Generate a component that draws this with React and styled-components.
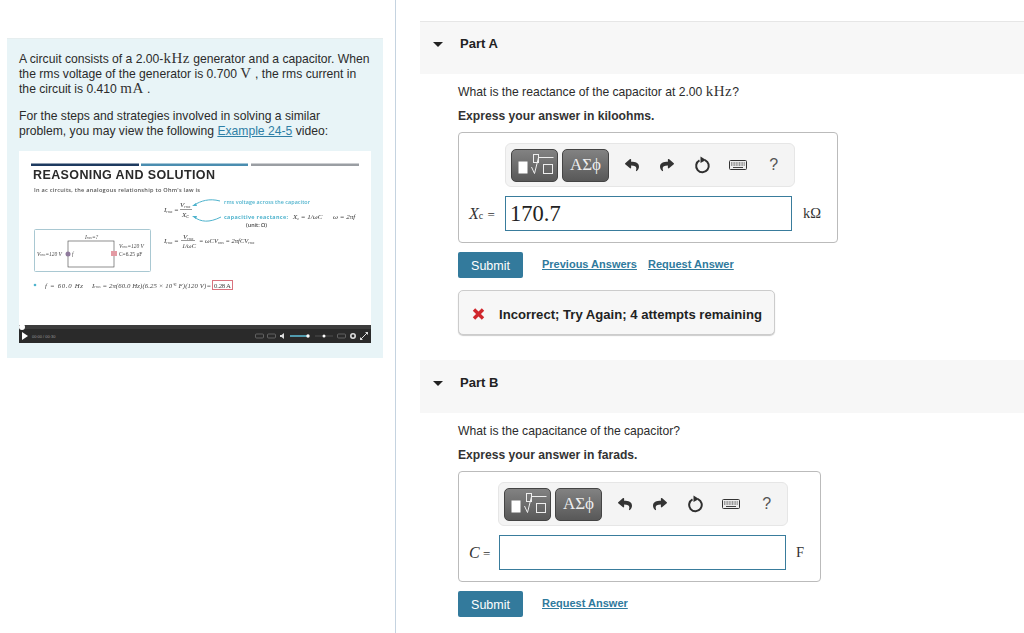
import React from "react";
import styled, { createGlobalStyle } from "styled-components";
import { FaReply, FaShare } from "react-icons/fa";

const Global = createGlobalStyle`
  html, body { margin: 0; padding: 0; background: #fff; }
  body { font-family: "Liberation Sans", Arial, sans-serif; color: #222; overflow: hidden; }
`;
const Page = styled.div`display: flex; width: 1024px; height: 633px; overflow: hidden;`;
const LeftColumn = styled.aside`
  width: 395px; flex: none; box-sizing: content-box; border-right: 1px solid #c5d3e0;
  padding-top: 38px;
`;
const Intro = styled.section`
  width: 376px; margin-left: 7px; height: 320px; box-sizing: border-box; background: #e8f4f7;
  border-top: 1px solid #e6eeef; padding: 13px 12px 0;
`;
const IntroText = styled.p`
  margin: 0 0 12px; font-size: 12.15px; line-height: 15px; color: #2b2b2b; width: 352px;
`;
const Tex = styled.span`
  font-family: "Liberation Serif", serif; font-size: 15px; line-height: 0; letter-spacing: .5px; color: #333;
`;
const Link = styled.a`
  color: ${p => (p.$bold ? "#2f7a9d" : "#2f7fa6")}; text-decoration: underline; font-weight: ${p => (p.$bold ? 700 : 400)};
  font-size: ${p => (p.$bold ? "11px" : "inherit")};
  padding-bottom: ${p => (p.$bold ? "2px" : "0")};
`;
const Video = styled.div`width: 352px; margin-top: 12px; position: relative;`;
const Slide = styled.svg`display: block; width: 352px; height: 174px; background: #fff; filter: blur(0.45px);`;
const VideoBar = styled.div`
  height: 18px; background: #2a2a2a; border-top: 4px solid #3c3c3c; box-sizing: border-box;
  display: flex; align-items: center; gap: 3px; padding: 0 3px;
`;
const Knob = styled.span`
  position: absolute; left: 0; bottom: 13px; width: 6px; height: 6px; border-radius: 50%; background: #fff;
`;
const VideoTime = styled.span`font-size: 4px; color: #999; margin-right: auto;`;
const VideoIcon = styled.svg`display: block; flex: none; height: 8px; width: ${p => p.$w || 8}px;`;

const RightColumn = styled.main`flex: 1; padding: 21px 0 0 24px; min-width: 0;`;
const Part = styled.section`margin-bottom: ${p => p.$gap || 0}px;`;
const PartHeader = styled.header`
  height: 53px; box-sizing: border-box; background: #f7f7f7; border-top: 1px solid ${p => (p.$line ? "#e6e6e6" : "#f7f7f7")};
  display: flex; align-items: flex-start; padding: 14px 0 0 13px;
`;
const Caret = styled.span`
  width: 0; height: 0; margin-top: 6px; border-left: 5px solid transparent; border-right: 5px solid transparent; border-top: 5px solid #222;
`;
const PartTitle = styled.h3`margin: 0 0 0 17px; font-size: 13px; line-height: 15px; font-weight: 700; color: #222;`;
const PartBody = styled.div`padding: 11px 0 0 38px;`;
const Question = styled.p`margin: 0; font-size: 12.15px; line-height: 15px; color: #2b2b2b;`;
const Instruction = styled.p`margin: 9px 0 8px; font-size: 12.15px; line-height: 15px; font-weight: 700; color: #333;`;
const AnswerBox = styled.div`
  width: ${p => p.$w}px; height: 111px; box-sizing: border-box; border: 1px solid #bbb; border-radius: 4px; background: #fff;
  padding: 10px 0 0; display: flex; flex-direction: column;
`;
const Toolbar = styled.div`
  margin-left: ${p => p.$left}px; width: 290px; height: 44px; box-sizing: border-box; border: 1px solid #e6e6e6; border-radius: 6px;
  background: #f4f4f4; display: flex; align-items: center; padding: 0 0 0 5px;
`;
const ToolButton = styled.div`
  width: 47px; height: 33px; box-sizing: border-box; margin-right: 4px; border: 1px solid #444; border-radius: 5px;
  background: linear-gradient(#828282, #585858); color: #eee; display: flex; align-items: center; justify-content: center;
  font-family: "Liberation Serif", serif; font-size: 17px;
`;
const ToolIcons = styled.div`
  flex: 1; display: grid; grid-template-columns: repeat(5, 35.5px); justify-items: center; align-items: center; padding-left: 1px; color: #333;
`;
const Help = styled.span`font-size: 16px; color: #555;`;
const InputRow = styled.div`display: flex; align-items: center; margin-top: 9px; height: 35px;`;
const VarLabel = styled.span`
  width: ${p => p.$w}px; box-sizing: border-box; padding-left: 10px; font-family: "Liberation Serif", serif; font-size: 13px; color: #333; white-space: nowrap;
  i { font-size: 16px; } small { font-size: 10px; margin-right: 1px; }
`;
const Input = styled.div`
  width: 287px; height: 35px; box-sizing: border-box; border: 1px solid #397c9c; background: #fff; padding-left: 4px;
  font-family: "Liberation Serif", serif; font-size: 22.5px; line-height: 33px; color: #222;
`;
const Unit = styled.span`margin-left: ${p => p.$m}px; font-family: "Liberation Serif", serif; font-size: 14.5px; color: #333;`;
const Actions = styled.div`display: flex; align-items: center; gap: 11px; margin-top: 9px;`;
const Submit = styled.button`
  width: 65px; height: 26px; border: 0; border-radius: 2px; background: #337a9c; color: #fff; padding: 1px 0 0; margin-right: 8px;
  font: 12.5px "Liberation Sans", Arial, sans-serif;
`;
const Feedback = styled.div`
  width: 317px; height: 45px; box-sizing: border-box; margin-top: 12px; border: 1px solid #ccc; border-radius: 5px; background: #f7f7f7;
  box-shadow: 0 1px 1px #ccc; display: flex; align-items: center; padding: 3px 0 0 13px; font-size: 13.1px; font-weight: 700; color: #222; gap: 14px;
`;

const SqrtIcon = () => (
  <svg width="38" height="26" viewBox="0 0 38 26" fill="none">
    <rect x="2.5" y="9.5" width="9" height="12" fill="#fff" />
    <rect x="17.5" y="2.5" width="5" height="8" stroke="#eee" strokeWidth="1" />
    <path d="M15.5 15l3 6.5 4-16h15" stroke="#eee" strokeWidth="1" />
    <rect x="27.5" y="12.5" width="9" height="9" stroke="#eee" strokeWidth="1" />
  </svg>
);
const ResetIcon = () => (
  <svg width="17" height="18" viewBox="0 0 17 18" fill="none">
    <path d="M11 4.2A6.3 6.3 0 1 1 5.5 4.4" stroke="#2f2f2f" strokeWidth="2" />
    <path d="M6.5 0.5l5.5 3.6-5.5 3z" fill="#2f2f2f" />
  </svg>
);
const KeyboardIcon = () => (
  <svg width="18" height="10" viewBox="0 0 18 10" fill="none">
    <rect x="0.5" y="0.5" width="17" height="9" rx="1" fill="#eee" stroke="#333" />
    <path d="M2 3h14M2 5h14" stroke="#444" strokeWidth="1" strokeDasharray="1 .6" />
    <path d="M4 7.5h10" stroke="#444" strokeWidth="1" />
  </svg>
);
const MathToolbar = ({ left }) => (
  <Toolbar $left={left}>
    <ToolButton><SqrtIcon /></ToolButton>
    <ToolButton>ΑΣϕ</ToolButton>
    <ToolIcons>
      <FaReply size={14} />
      <FaShare size={14} />
      <ResetIcon />
      <KeyboardIcon />
      <Help>?</Help>
    </ToolIcons>
  </Toolbar>
);

const SlideArt = () => (
  <Slide viewBox="0 0 352 174">
    <g>
      <rect x="12" y="12.5" width="108" height="2.5" fill="#1d3a60" />
      <rect x="122" y="12.5" width="107" height="2.5" fill="#4a8db0" />
      <rect x="232" y="12.5" width="108" height="2.5" fill="#9a9ea3" />
    </g>
    <text x="14" y="28" fontFamily="Liberation Sans" fontWeight="700" fontSize="12.5" textLength="182" fill="#2a2a2a">REASONING AND SOLUTION</text>
    <text x="15" y="41" fontFamily="Open Sans" fontWeight="600" fontSize="5.6" textLength="166" fill="#555">In ac circuits, the analogous relationship to Ohm's law is</text>
    <g fontFamily="Liberation Serif" fontSize="7" fill="#333">
      <text x="145" y="61" fontStyle="italic">I<tspan fontSize="4" dy="1">rms</tspan><tspan dy="-1"> =</tspan></text>
      <text x="161" y="56" fontStyle="italic">V<tspan fontSize="4" dy="1">rms</tspan></text>
      <path d="M161 58.5h12" stroke="#333" strokeWidth=".5" />
      <text x="163" y="66" fontStyle="italic">X<tspan fontSize="4" dy="1">C</tspan></text>
      <text x="145" y="92" fontStyle="italic">I<tspan fontSize="4" dy="1">rms</tspan><tspan dy="-1"> =</tspan></text>
      <text x="164" y="87.5" fontStyle="italic">V<tspan fontSize="4" dy="1">rms</tspan></text>
      <path d="M162 89.5h14" stroke="#333" strokeWidth=".5" />
      <text x="163" y="96.5" fontStyle="italic" fontSize="6.5">1/ωC</text>
      <text x="180" y="92" fontStyle="italic" fontSize="6.5">= ωCV<tspan fontSize="4" dy="1">rms</tspan><tspan dy="-1"> = 2πfCV</tspan><tspan fontSize="4" dy="1">rms</tspan></text>
      <text x="274" y="68" fontStyle="italic">X<tspan fontSize="4" dy="1">c</tspan><tspan dy="-1"> = 1/ωC</tspan></text>
      <text x="314" y="68" fontStyle="italic">ω = 2πf</text>
    </g>
    <g fontFamily="Open Sans" fontSize="5.4" fill="#4fb3cd">
      <text x="205" y="53" fontWeight="600" textLength="86">rms voltage across the capacitor</text>
      <text x="205" y="68" fontWeight="700" textLength="64">capacitive reactance:</text>
      <text x="227" y="76" fill="#444" fontWeight="600">(unit: Ω)</text>
    </g>
    <path d="M201 50C190 47 182 50 175 54" stroke="#4fb3cd" fill="none" />
    <path d="M202 66C190 72 182 71 175 66" stroke="#4fb3cd" fill="none" />
    <path d="M173 55l4-3 1 3zM173 65l4 3 1-3z" fill="#4fb3cd" />
    <rect x="15.5" y="78.5" width="116" height="42" rx="1" fill="#fff" stroke="#a9c8d2" strokeWidth="1" />
    <rect x="49" y="90" width="46" height="26" fill="none" stroke="#444" strokeWidth=".6" />
    <circle cx="49" cy="103" r="2.5" fill="#8f7a9c" />
    <rect x="92" y="100" width="6" height="5" fill="#e39aa3" />
    <g fontFamily="Liberation Serif" fontSize="5.4" fill="#444">
      <text x="66" y="88" fontStyle="italic">I<tspan fontSize="3.4">rms</tspan>=?</text>
      <text x="18" y="105" fontStyle="italic">V<tspan fontSize="3.4">rms</tspan>=120 V</text>
      <text x="53" y="105" fontStyle="italic">f</text>
      <text x="100" y="97" fontStyle="italic">V<tspan fontSize="3.4">rms</tspan>=120 V</text>
      <text x="100" y="105">C=6.25 μF</text>
    </g>
    <circle cx="16" cy="134" r="1.3" fill="#4fb3cd" />
    <g fontFamily="Liberation Serif" fontSize="6.8" fill="#444">
      <text x="26" y="136.5" fontStyle="italic" textLength="38">f = 60.0 Hz</text>
      <text x="73" y="136.5" fontStyle="italic" textLength="119">I<tspan fontSize="4">rms</tspan> = 2π(60.0 Hz)(6.25 × 10⁻⁶ F)(120 V)=</text>
      <text x="195" y="136.5" textLength="17">0.28 A</text>
    </g>
    <rect x="193.5" y="129.5" width="20" height="9" fill="none" stroke="#d9737e" strokeWidth="1" />
  </Slide>
);

const VideoControls = () => (
  <VideoBar>
    <VideoIcon $w={7} viewBox="0 0 7 8"><path d="M0 0l6 4-6 4z" fill="#fff" /></VideoIcon>
    <VideoTime>00:00 / 00:30</VideoTime>
    <VideoIcon $w={9} viewBox="0 0 9 6"><rect x=".5" y="1" width="8" height="4" rx="1" fill="none" stroke="#888" strokeWidth=".6" /></VideoIcon>
    <VideoIcon $w={9} viewBox="0 0 9 6"><rect x=".5" y="1" width="8" height="4" rx="1" fill="none" stroke="#888" strokeWidth=".6" /></VideoIcon>
    <VideoIcon viewBox="0 0 8 8"><path d="M1 3h1.5L5 1v6L2.5 5H1z" fill="#ddd" /></VideoIcon>
    <VideoIcon $w={21} viewBox="0 0 21 8"><path d="M0 4h18" stroke="#5cb8d0" strokeWidth="1.6" /><circle cx="18" cy="4" r="1.7" fill="#fff" /></VideoIcon>
    <VideoIcon $w={20} viewBox="0 0 20 8"><path d="M1 4h18" stroke="#777" strokeWidth=".5" /><circle cx="10" cy="4" r="1.5" fill="#fff" /></VideoIcon>
    <VideoIcon $w={9} viewBox="0 0 9 6"><rect x=".5" y="1" width="8" height="4" rx="1" fill="none" stroke="#888" strokeWidth=".6" /></VideoIcon>
    <VideoIcon viewBox="0 0 8 8"><circle cx="4" cy="4" r="2.2" fill="none" stroke="#ddd" strokeWidth="1.6" /></VideoIcon>
    <VideoIcon viewBox="0 0 8 8"><path d="M1 7l6-6" stroke="#ddd" strokeWidth="1" /><path d="M0 8V5l3 3zM8 0v3L5 0z" fill="#ddd" /></VideoIcon>
  </VideoBar>
);

export default function App() {
  return (
    <Page>
      <Global />
      <LeftColumn>
        <Intro>
          <IntroText>
            A circuit consists of a 2.00-<Tex>kHz</Tex> generator and a capacitor. When the rms voltage of the generator is 0.700 <Tex>V</Tex> , the rms current in the circuit is 0.410 <Tex>mA</Tex> .
          </IntroText>
          <IntroText>
            For the steps and strategies involved in solving a similar<br />problem, you may view the following <Link href="#">Example 24-5</Link> video:
          </IntroText>
          <Video>
            <SlideArt />
            <VideoControls />
            <Knob />
          </Video>
        </Intro>
      </LeftColumn>
      <RightColumn>
        <Part $gap={25}>
          <PartHeader $line><Caret /><PartTitle>Part A</PartTitle></PartHeader>
          <PartBody>
            <Question>What is the reactance of the capacitor at 2.00 <Tex>kHz</Tex>?</Question>
            <Instruction>Express your answer in kiloohms.</Instruction>
            <AnswerBox $w={380}>
              <MathToolbar left={46} />
              <InputRow>
                <VarLabel $w={46}><i>X</i><small>c</small> =</VarLabel>
                <Input>170.7</Input>
                <Unit $m={11}>kΩ</Unit>
              </InputRow>
            </AnswerBox>
            <Actions>
              <Submit>Submit</Submit>
              <Link $bold href="#">Previous Answers</Link>
              <Link $bold href="#">Request Answer</Link>
            </Actions>
            <Feedback>
              <svg width="13" height="12" viewBox="0 0 13 12"><path d="M2 1.5l9 9M11 1.5l-9 9" stroke="#d0272d" strokeWidth="3.4" /></svg>
              Incorrect; Try Again; 4 attempts remaining
            </Feedback>
          </PartBody>
        </Part>
        <Part>
          <PartHeader><Caret /><PartTitle>Part B</PartTitle></PartHeader>
          <PartBody>
            <Question>What is the capacitance of the capacitor?</Question>
            <Instruction>Express your answer in farads.</Instruction>
            <AnswerBox $w={363}>
              <MathToolbar left={39} />
              <InputRow>
                <VarLabel $w={40}><i>C</i> =</VarLabel>
                <Input />
                <Unit $m={10}>F</Unit>
              </InputRow>
            </AnswerBox>
            <Actions>
              <Submit>Submit</Submit>
              <Link $bold href="#">Request Answer</Link>
            </Actions>
          </PartBody>
        </Part>
      </RightColumn>
    </Page>
  );
}
